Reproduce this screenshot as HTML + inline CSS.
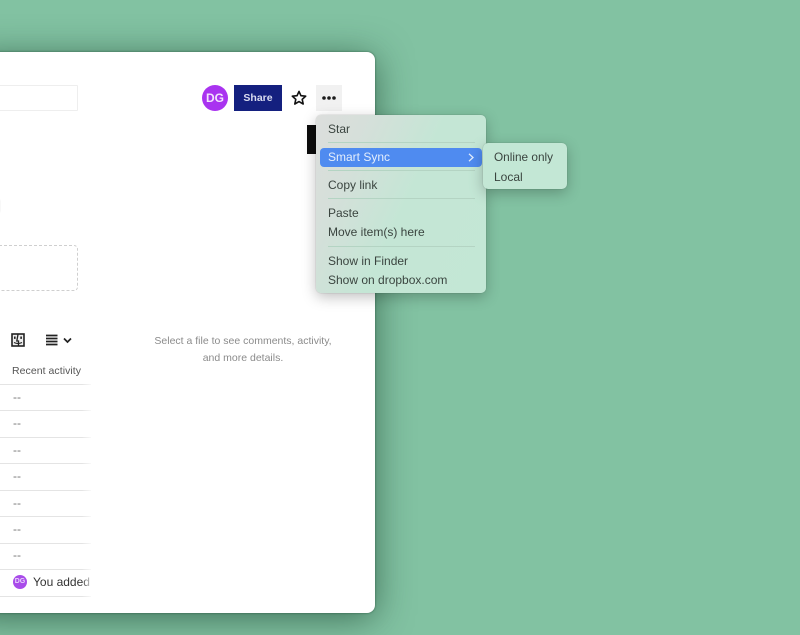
<!DOCTYPE html>
<html>
<head>
<meta charset="utf-8">
<style>
html,body{margin:0;padding:0;width:800px;height:635px;overflow:hidden;background:#82c2a2;font-family:"Liberation Sans",sans-serif}
.abs{position:absolute}
#win{position:absolute;left:-30px;top:52px;width:405px;height:561px;background:#fff;border-radius:8px;box-shadow:0 5px 36px rgba(20,60,40,.62),0 0 2px rgba(20,60,40,.6)}
.t{position:absolute;white-space:nowrap;filter:blur(.35px)}
.line{position:absolute;left:0;width:91px;height:1px;background:linear-gradient(90deg,#e4e4e4 90%,#f8f8f8)}
.dash{position:absolute;left:13px;font-size:12px;color:#777;line-height:14px;filter:blur(.35px)}
#menu{position:absolute;left:316px;top:115px;width:170px;height:178px;border-radius:5px;background:linear-gradient(115deg,#dcdedc 0%,#d6dfda 20%,#c4e6d5 52%,#c3e7d5 100%);box-shadow:0 0 1px rgba(0,0,0,.35),0 4px 14px rgba(0,0,0,.25)}
#sub{position:absolute;left:483px;top:143px;width:84px;height:46px;border-radius:5px;background:#c3e7d5;box-shadow:0 0 1px rgba(0,0,0,.3),0 4px 14px rgba(0,0,0,.25)}
.mi{position:absolute;font-size:12px;line-height:15px;color:#3a443f;white-space:nowrap;filter:blur(.3px)}
.sep{position:absolute;left:328px;width:147px;height:1px;background:#b4d4c3}
</style>
</head>
<body>
<div id="win"></div>

<!-- search box -->
<div class="abs" style="left:-10px;top:85px;width:86px;height:24px;border:1px solid #eeeeee;border-radius:1px;filter:blur(.3px)"></div>
<!-- pill -->
<div class="abs" style="left:-10px;top:197px;width:11px;height:18px;background:#f8f8f8;border-radius:5px;"></div>
<!-- dashed -->
<div class="abs" style="left:-10px;top:245px;width:86px;height:44px;border:1px dashed #cfcfcf;border-radius:4px;filter:blur(.3px)"></div>

<!-- avatar -->
<div class="abs" style="left:202px;top:85px;width:26px;height:26px;border-radius:50%;background:#a933f0;color:#f3e4fd;font-size:12px;font-weight:bold;line-height:27px;text-align:center;filter:blur(.3px);">DG</div>
<!-- share -->
<div class="abs" style="left:234px;top:85px;width:48px;height:26px;background:#14207f;"></div>
<div class="t" style="left:234px;top:85px;width:48px;color:#d9dcf0;font-size:10.500px;font-weight:bold;line-height:27px;text-align:center;">Share</div>
<!-- star -->
<svg class="abs" style="left:291px;top:90px" width="16" height="16" viewBox="0 0 16 16"><path d="M8 1.400l1.950 4.300 4.750.5-3.500 3.150 1 4.650L8 11.600l-4.200 2.400 1-4.650L1.300 6.200l4.750-.5z" fill="none" stroke="#111" stroke-width="1.600" stroke-linejoin="round"/></svg>
<!-- more -->
<div class="abs" style="left:316px;top:85px;width:26px;height:26px;background:#f1f1f1;"></div>
<svg class="abs" style="left:321px;top:94px" width="16" height="8" viewBox="0 0 16 8"><circle cx="3" cy="4" r="1.800" fill="#1c1c1c"/><circle cx="8" cy="4" r="1.800" fill="#1c1c1c"/><circle cx="13" cy="4" r="1.800" fill="#1c1c1c"/></svg>
<!-- black tooltip -->
<div class="abs" style="left:307px;top:125px;width:12px;height:29px;background:#0c0c0c;"></div>

<!-- toolbar icons -->
<svg class="abs" style="left:11px;top:333px" width="14" height="14" viewBox="0 0 14 14"><rect x="1" y="1" width="12" height="12" fill="#eee" stroke="#222" stroke-width="1.600"/><path d="M7 1.500L5.800 8H7.500V12.500" fill="none" stroke="#222" stroke-width="1.300"/><rect x="3" y="3.500" width="1.600" height="2.400" fill="#222"/><rect x="9.300" y="3.500" width="1.600" height="2.400" fill="#222"/><path d="M3 9.500q4 2 8 0" fill="none" stroke="#222" stroke-width="1.200"/></svg>
<svg class="abs" style="left:45px;top:334px" width="28" height="12" viewBox="0 0 28 12"><path d="M1 1.500H12.500M1 4.500H12.500M1 7.500H12.500M1 10.500H12.500" stroke="#222" stroke-width="1.800"/><path d="M19 4.500l3.500 3.500L26 4.500" fill="none" stroke="#222" stroke-width="1.700"/></svg>

<div class="t" style="left:12px;top:364px;font-size:10.500px;line-height:14px;color:#555;letter-spacing:.05px;">Recent activity</div>
<div class="line" style="top:384px"></div>
<div class="dash" style="top:390px">--</div>
<div class="line" style="top:410px"></div>
<div class="dash" style="top:416px">--</div>
<div class="line" style="top:437px"></div>
<div class="dash" style="top:443px">--</div>
<div class="line" style="top:463px"></div>
<div class="dash" style="top:469px">--</div>
<div class="line" style="top:490px"></div>
<div class="dash" style="top:496px">--</div>
<div class="line" style="top:516px"></div>
<div class="dash" style="top:522px">--</div>
<div class="line" style="top:543px"></div>
<div class="dash" style="top:548px">--</div>
<div class="line" style="top:569px"></div>
<div class="abs" style="left:13px;top:575px;width:14px;height:14px;border-radius:50%;background:#a94cea;color:#e9d5fa;font-size:7px;font-weight:bold;line-height:14px;text-align:center;filter:blur(.3px);">DG</div>
<div class="t" style="left:33px;top:575px;width:57px;overflow:hidden;font-size:12px;line-height:15px;color:#333;-webkit-mask-image:linear-gradient(90deg,#000 85%,rgba(0,0,0,.3));mask-image:linear-gradient(90deg,#000 85%,rgba(0,0,0,.3));">You added</div>
<div class="line" style="top:596px"></div>

<!-- details -->
<div class="t" style="left:143px;top:333px;width:200px;text-align:center;font-size:10.500px;line-height:17px;color:#8b8b8b;">Select a file to see comments, activity,<br>and more details.</div>

<!-- menus -->
<div id="menu"></div>
<div class="abs" style="left:320px;top:148px;width:162px;height:19px;border-radius:4px;background:#4f8bf0;"></div>
<div class="mi" style="left:328px;top:122px">Star</div>
<div class="sep" style="top:142px"></div>
<div class="mi" style="left:328px;top:150px;color:#e4eefc">Smart Sync</div>
<svg class="abs" style="left:467px;top:153px" width="8" height="9" viewBox="0 0 8 9"><path d="M2 .8L6 4.500 2 8.200" fill="none" stroke="#e4eefc" stroke-width="1.300"/></svg>
<div class="sep" style="top:170px"></div>
<div class="mi" style="left:328px;top:178px">Copy link</div>
<div class="sep" style="top:198px"></div>
<div class="mi" style="left:328px;top:206px">Paste</div>
<div class="mi" style="left:328px;top:225px">Move item(s) here</div>
<div class="sep" style="top:246px"></div>
<div class="mi" style="left:328px;top:254px">Show in Finder</div>
<div class="mi" style="left:328px;top:273px">Show on dropbox.com</div>

<div id="sub"></div>
<div class="mi" style="left:494px;top:150px;font-size:11.800px">Online only</div>
<div class="mi" style="left:494px;top:170px">Local</div>
</body>
</html>
